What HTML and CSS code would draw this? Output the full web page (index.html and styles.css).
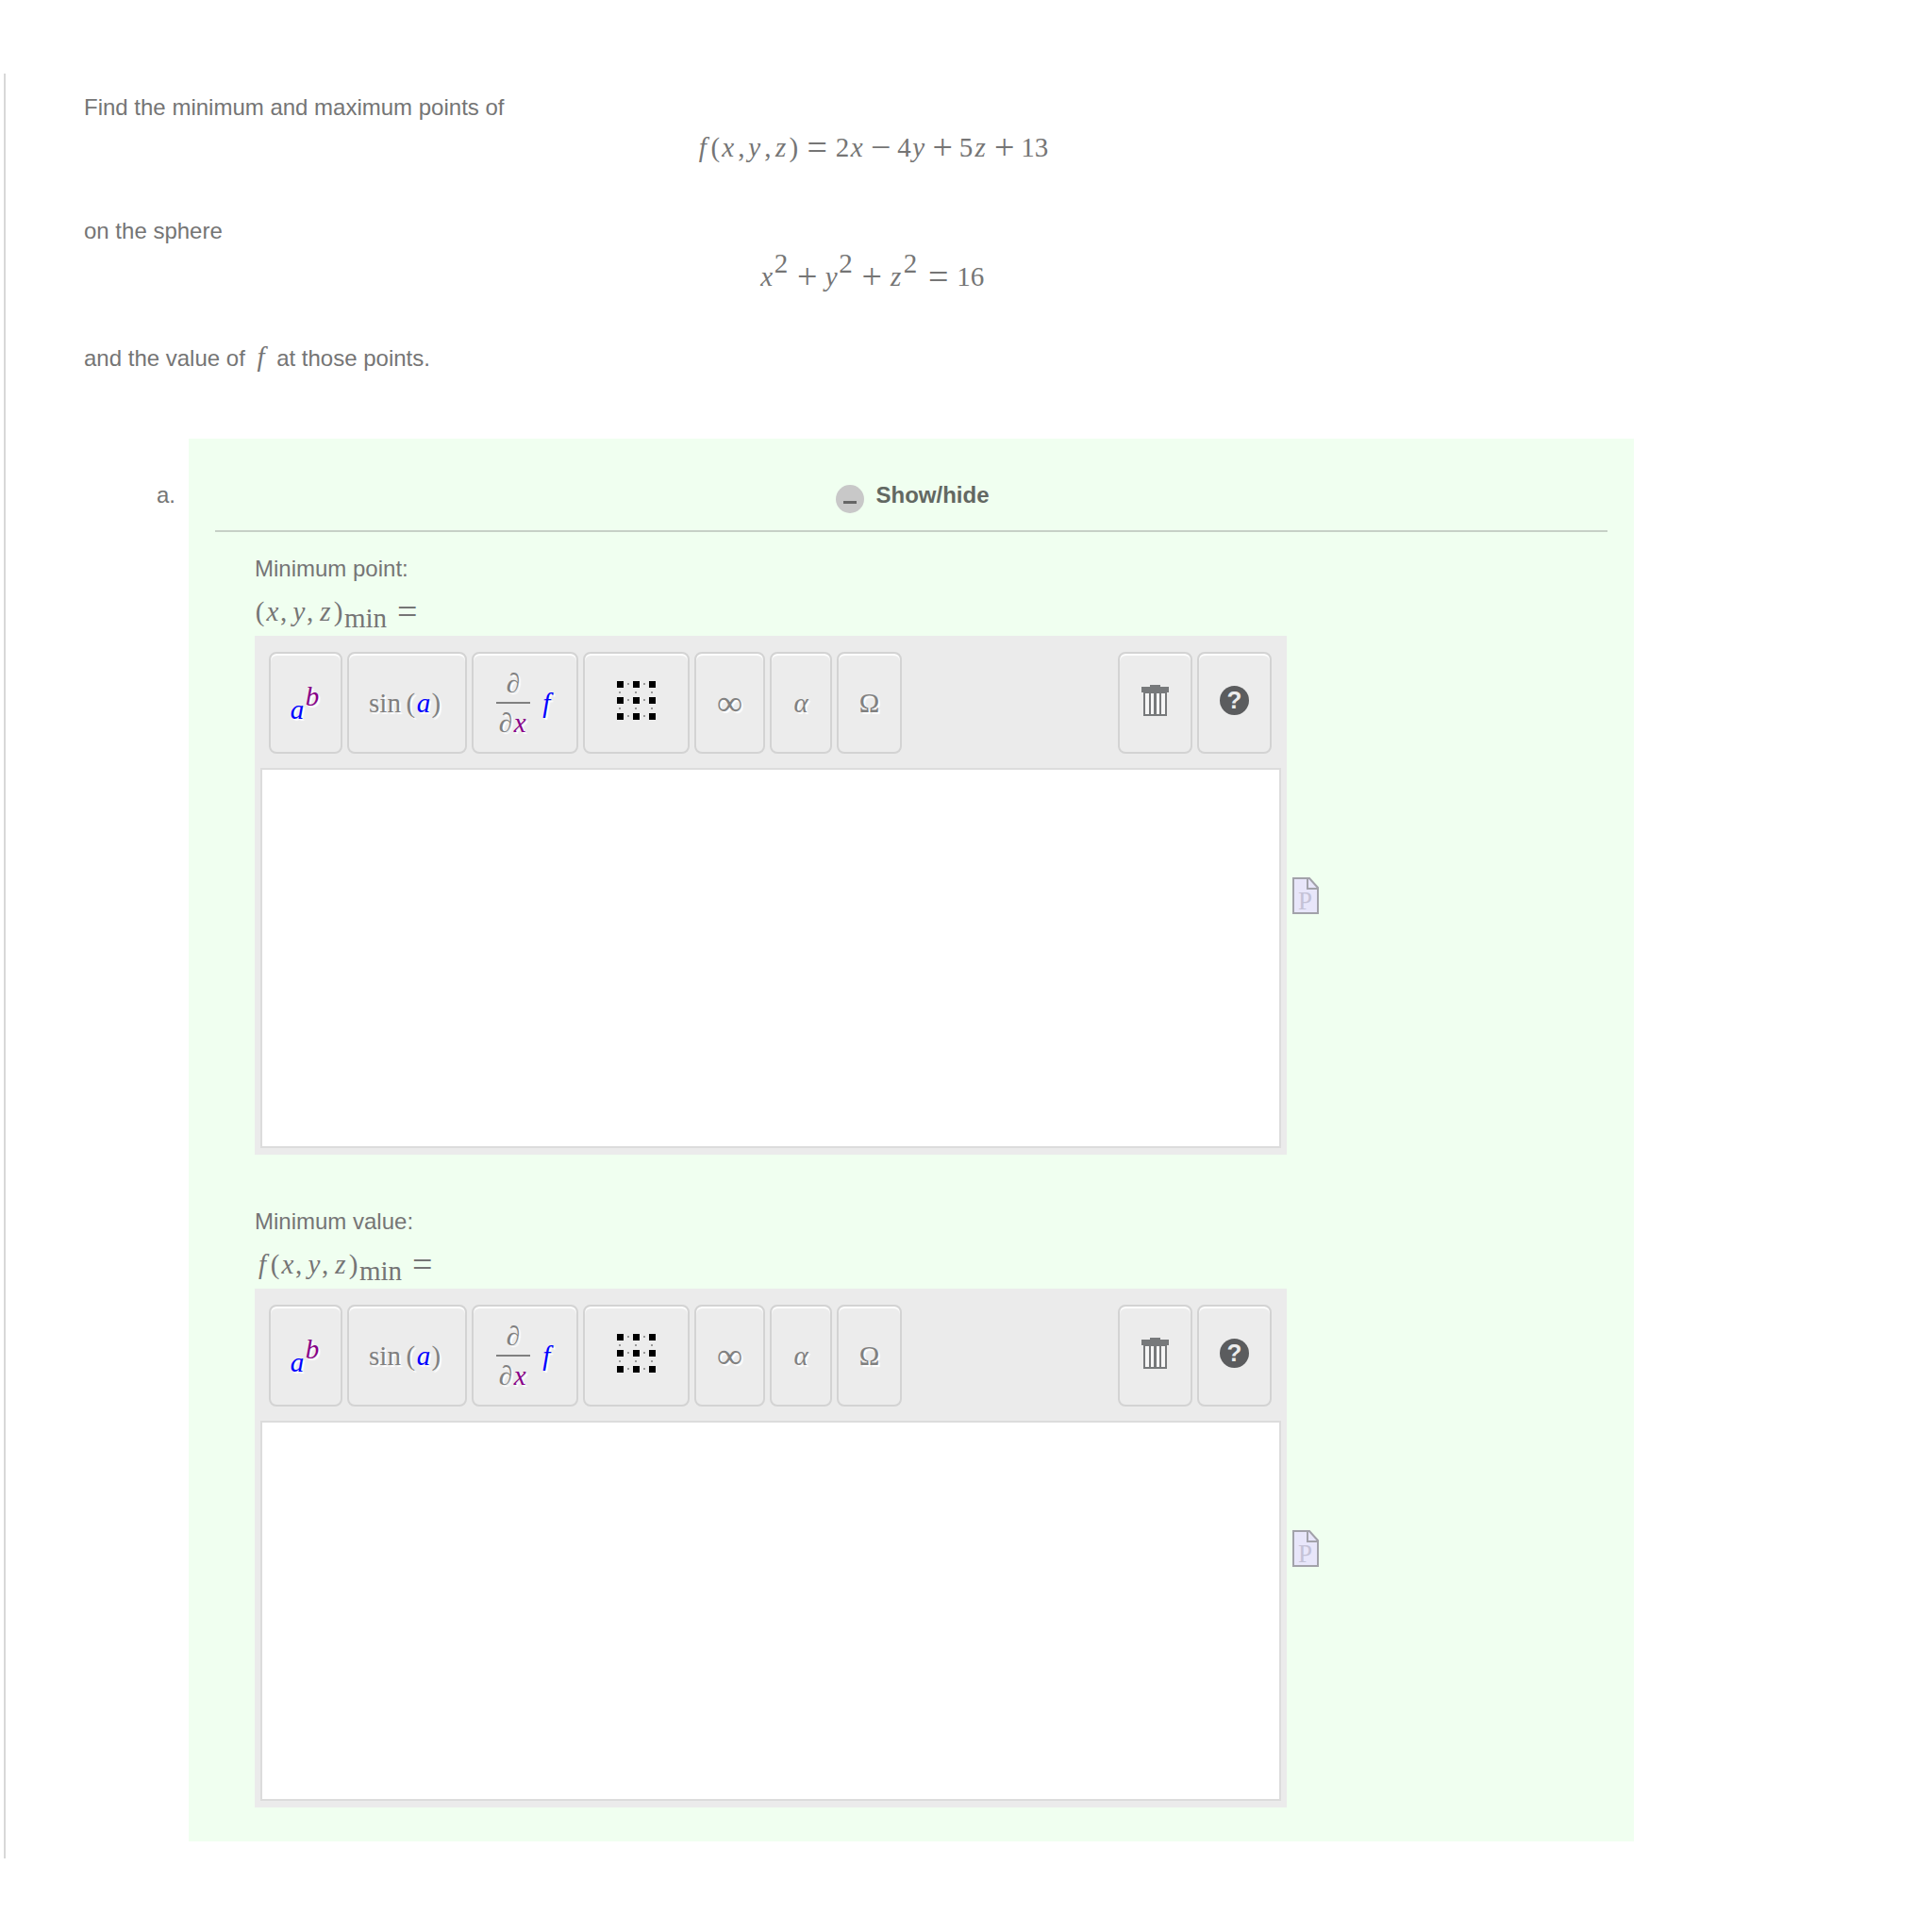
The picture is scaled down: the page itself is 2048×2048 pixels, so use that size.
FILE: index.html
```
<!DOCTYPE html>
<html lang="en">
<head>
<meta charset="utf-8">
<meta name="viewport" content="width=device-width, initial-scale=1">
<title>Minimum and maximum points</title>
<link rel="stylesheet" href="styles.css">
</head>
<body>

<div class="question">

<p class="line">Find the minimum and maximum points of</p>
<div class="math equation first"><i>f</i><b>(</b><i>x</i><s>,</s><i>y</i><s>,</s><i>z</i><b>)</b><span class="rel">=</span>2<i>x</i><span class="op">−</span>4<i>y</i><span class="op">+</span>5<i>z</i><span class="op">+</span>13</div>
<p class="line">on the sphere</p>
<div class="math equation second"><i>x</i><sup>2</sup><span class="op">+</span><i>y</i><sup>2</sup><span class="op">+</span><i>z</i><sup>2</sup><span class="rel">=</span>16</div>
<p class="line">and the value of <span class="math"><i>f</i></span> at those points.</p>

<ol class="parts">
<li class="part">
  <span class="letter">a.</span>
  <div class="panel">
    <div class="toggleRow">
      <button type="button" class="toggle"><span class="minus"></span>Show/hide</button>
    </div>

    <div class="answer">
      <label class="line" for="minPoint">Minimum point:</label>
      <div class="math formula"><b>(</b><i>x</i><s>,</s><i>y</i><s>,</s><i>z</i><b>)</b><sub>min</sub><span class="rel">=</span></div>
      <div class="editorRow">
        <div class="editor">
          <div class="toolbar">
            <button type="button" class="btn power math"><i class="blue">a</i><sup class="purple"><i>b</i></sup></button>
            <button type="button" class="btn sine math">sin<b class="open">(</b><i class="blue">a</i><b>)</b></button>
            <button type="button" class="btn partial math"><span class="frac"><span>∂</span><span class="den">∂<i class="purple">x</i></span></span><i class="blue">f</i></button>
            <button type="button" class="btn matrix" aria-label="Matrix"><svg class="icon" width="41" height="41" viewBox="0 0 41 41"><path d="M0 0h7v7H0zM17 0h7v7h-7zM34 0h7v7h-7zM0 17h7v7H0zM17 17h7v7h-7zM34 17h7v7h-7zM0 34h7v7H0zM17 34h7v7h-7zM34 34h7v7h-7z" fill="#000"/><path d="M11 2h2v2h-2zM28 2h2v2h-2zM11 19h2v2h-2zM28 19h2v2h-2zM11 36h2v2h-2zM28 36h2v2h-2zM2 11h2v2H2zM19 11h2v2h-2zM36 11h2v2h-2zM2 28h2v2H2zM19 28h2v2h-2zM36 28h2v2h-2z" fill="#999"/></svg></button>
            <button type="button" class="btn infinity math">∞</button>
            <button type="button" class="btn alpha math"><i>α</i></button>
            <button type="button" class="btn omega math">Ω</button>
            <button type="button" class="btn trash" aria-label="Clear"><svg class="icon" width="29" height="33" viewBox="0 0 29 33"><path d="M2 8h25v25H2z" fill="#77797b"/><path d="M0 2h9V0h11v2h9v6H0z" fill="#77797b"/><path d="M4 9h4v22H4zM10 9h3v22h-3zM16 9h3v22h-3zM21 9h4v22h-4z" fill="#f6f6f6"/></svg></button>
            <button type="button" class="btn help" aria-label="Help"><span class="helpMark">?</span></button>
          </div>
          <textarea id="minPoint" class="field"></textarea>
        </div>
        <svg class="preview" width="28" height="39" viewBox="0 0 28 39"><path d="M1 1h17l9 10v27H1z" fill="#e8e6fa" stroke="#a2a2aa" stroke-width="2"/><path d="M16 1v11h11" fill="none" stroke="#a2a2aa" stroke-width="2"/><text x="6" y="34" class="previewText">P</text></svg>
      </div>
    </div>

    <div class="answer">
      <label class="line" for="minValue">Minimum value:</label>
      <div class="math formula"><i>f</i><b>(</b><i>x</i><s>,</s><i>y</i><s>,</s><i>z</i><b>)</b><sub>min</sub><span class="rel">=</span></div>
      <div class="editorRow">
        <div class="editor">
          <div class="toolbar">
            <button type="button" class="btn power math"><i class="blue">a</i><sup class="purple"><i>b</i></sup></button>
            <button type="button" class="btn sine math">sin<b class="open">(</b><i class="blue">a</i><b>)</b></button>
            <button type="button" class="btn partial math"><span class="frac"><span>∂</span><span class="den">∂<i class="purple">x</i></span></span><i class="blue">f</i></button>
            <button type="button" class="btn matrix" aria-label="Matrix"><svg class="icon" width="41" height="41" viewBox="0 0 41 41"><path d="M0 0h7v7H0zM17 0h7v7h-7zM34 0h7v7h-7zM0 17h7v7H0zM17 17h7v7h-7zM34 17h7v7h-7zM0 34h7v7H0zM17 34h7v7h-7zM34 34h7v7h-7z" fill="#000"/><path d="M11 2h2v2h-2zM28 2h2v2h-2zM11 19h2v2h-2zM28 19h2v2h-2zM11 36h2v2h-2zM28 36h2v2h-2zM2 11h2v2H2zM19 11h2v2h-2zM36 11h2v2h-2zM2 28h2v2H2zM19 28h2v2h-2zM36 28h2v2h-2z" fill="#999"/></svg></button>
            <button type="button" class="btn infinity math">∞</button>
            <button type="button" class="btn alpha math"><i>α</i></button>
            <button type="button" class="btn omega math">Ω</button>
            <button type="button" class="btn trash" aria-label="Clear"><svg class="icon" width="29" height="33" viewBox="0 0 29 33"><path d="M2 8h25v25H2z" fill="#77797b"/><path d="M0 2h9V0h11v2h9v6H0z" fill="#77797b"/><path d="M4 9h4v22H4zM10 9h3v22h-3zM16 9h3v22h-3zM21 9h4v22h-4z" fill="#f6f6f6"/></svg></button>
            <button type="button" class="btn help" aria-label="Help"><span class="helpMark">?</span></button>
          </div>
          <textarea id="minValue" class="field"></textarea>
        </div>
        <svg class="preview" width="28" height="39" viewBox="0 0 28 39"><path d="M1 1h17l9 10v27H1z" fill="#e8e6fa" stroke="#a2a2aa" stroke-width="2"/><path d="M16 1v11h11" fill="none" stroke="#a2a2aa" stroke-width="2"/><text x="6" y="34" class="previewText">P</text></svg>
      </div>
    </div>
  </div>
</li>
</ol>

</div>

</body>
</html>
```
FILE: styles.css
```
body {
  margin: 0;
  padding: 78px 0 0 4px;
  background: #fff;
  color: #757575;
  font-family: "Liberation Sans", Arial, sans-serif;
  font-size: 24px;
  line-height: 32px;
}

.question {
  border-left: 2px solid #d8d8d8;
  padding: 20px 289px 18px 83px;
}

.line {
  display: block;
  margin: 0;
}

/* Formulas: i = variable, b = bracket, s = comma */
.math {
  font-family: "Liberation Serif", "Times New Roman", serif;
  font-size: 29px;
}
.line .math {
  margin: 0 2px;
  line-height: 0;
}
.math i {
  display: inline-block;
  width: 16px;
  text-align: center;
}
.math b {
  display: inline-block;
  width: 11px;
  text-align: center;
  font-weight: normal;
}
.math s {
  display: inline-block;
  width: 12px;
  text-decoration: none;
}
.math sup, .math sub {
  font-size: 29px;
  line-height: 0;
}
.math sup {
  vertical-align: 14px;
  margin-right: 3px;
}
.math sub {
  vertical-align: -7px;
  margin: 0 2px 0 1px;
}
.op, .rel {
  display: inline-block;
  width: 23px;
  margin: 0 6px;
  font-size: 38px;
  line-height: 30px;
  text-align: center;
  vertical-align: -3px;
}
.rel { margin: 0 8px; }

.equation {
  line-height: 40px;
  text-align: center;
}
.first { margin: 6px 0 53px; }
.second { margin: 12px 0 51px; }

.parts {
  list-style: none;
  margin: 69px 0 0;
  padding: 0 27px 0 77px;
}
.part { display: flex; }
.letter {
  width: 34px;
  padding-top: 44px;
}
.panel {
  flex: 1;
  background: #f0fff0;
  padding: 44px 28px 36px;
}

.toggleRow {
  display: flex;
  justify-content: center;
  border-bottom: 2px solid #c6d0c6;
  padding: 0 0 21px 2px;
}
.toggle {
  display: flex;
  align-items: center;
  gap: 13px;
  height: 32px;
  padding: 0;
  border: none;
  background: none;
  color: #626862;
  font: inherit;
  font-weight: bold;
  cursor: pointer;
}
.minus {
  display: flex;
  justify-content: center;
  box-sizing: border-box;
  width: 30px;
  height: 30px;
  margin-top: 8px;
  padding-top: 17px;
  border-radius: 50%;
  background: #c8c8c8;
}
.minus::before {
  content: "";
  width: 14px;
  height: 3px;
  background: #666;
}

.answer { padding: 23px 0 0 42px; }
.answer + .answer { padding-top: 55px; }
.formula {
  margin: 9px 0 6px;
  line-height: 40px;
}

.editorRow {
  display: flex;
  align-items: center;
  gap: 6px;
}
.editor {
  flex: 0 1 1094px;
  background: #ebebeb;
}
.toolbar {
  display: flex;
  gap: 5px;
  padding: 17px 16px 15px 15px;
}
.btn {
  display: flex;
  align-items: center;
  justify-content: center;
  box-sizing: border-box;
  height: 108px;
  padding: 0;
  border: 2px solid #d3d3d3;
  border-radius: 8px;
  background: #ececec;
  box-shadow: inset 0 2px 1px #fff;
  color: #808080;
  line-height: 32px;
  text-shadow: 2px 2px 1px #fff;
  cursor: pointer;
}
.power {
  width: 78px;
  padding: 14px 2px 0 0;
}
.power sup {
  margin: 0;
  padding-bottom: 28px;
}
.sine {
  width: 127px;
  padding-right: 4px;
}
.open { margin-left: 5px; }
.partial {
  width: 113px;
  gap: 9px;
}
.matrix { width: 113px; }
.infinity { width: 75px; font-size: 38px; }
.alpha { width: 66px; }
.omega { width: 69px; }
.trash { width: 79px; margin-left: auto; }
.help { width: 79px; }
.blue { color: #00f; }
.purple { color: #808; }

.frac {
  display: flex;
  flex-direction: column;
  line-height: 40px;
  text-align: center;
}
.den {
  padding: 0 3px;
  border-top: 2px solid #808080;
}
.icon { margin-bottom: 6px; }
.helpMark {
  width: 31px;
  height: 31px;
  margin-bottom: 6px;
  border-radius: 50%;
  background: #5b5c5e;
  color: #ececec;
  font: bold 26px/31px "Liberation Sans", Arial, sans-serif;
  text-shadow: none;
}

.field {
  display: block;
  box-sizing: border-box;
  width: calc(100% - 12px);
  height: 403px;
  margin: 0 6px;
  border: 2px solid #dcdcdc;
  background: #fff;
  resize: none;
  outline: none;
}
.editor::after {
  content: "";
  display: block;
  height: 7px;
}
.previewText {
  fill: #c4c2d6;
  font: 27px "Liberation Serif", serif;
}
```
